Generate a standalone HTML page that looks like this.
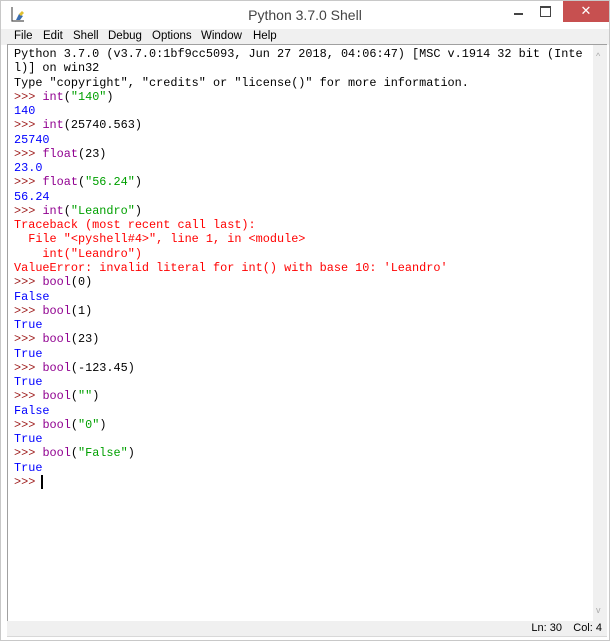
<!DOCTYPE html>
<html><head><style>
body{margin:0;width:610px;height:641px;background:#f0f0f0;position:relative;overflow:hidden;font-family:"Liberation Sans",sans-serif}
.win{position:absolute;left:0;top:0;width:608px;height:639px;border:1px solid #c8c8c8;background:#fff}
.title{position:absolute;left:0;top:0;width:608px;height:28px;background:#fff;}
.title .t{position:absolute;left:0;width:608px;top:6px;text-align:center;font-size:14px;color:#444}
.close{position:absolute;right:0;top:0;width:46px;height:21px;background:#c75050;color:#fff;text-align:center;font-size:13px;line-height:20px}
.max{position:absolute;right:58px;top:5px;width:9px;height:8px;border:1px solid #444;border-top-width:2px}
.min{position:absolute;right:86px;top:12px;width:9px;height:2px;background:#444}
.menu{position:absolute;left:0;top:28px;width:608px;height:16px;background:#f0f0f0;font-size:11.5px;color:#000}
.menu span{position:absolute;top:1px}
.text{position:absolute;left:6px;top:43px;width:586px;height:576px;border:1px solid #a0a0a0;border-right:none;background:#fff}
.scroll{position:absolute;left:592px;top:43px;width:14px;height:577px;background:#f0f0f0;border-top:1px solid #a0a0a0}
pre{margin:0;position:absolute;left:6px;top:2px;font-family:"Liberation Mono",monospace;font-size:11.85px;line-height:14.27px;color:#000}
.p{color:#a02020}.b{color:#900090}.s{color:#00a000}.o{color:#0000ff}.e{color:#ff0000}
.status{position:absolute;left:6px;top:620px;width:600px;height:15px;background:#f0f0f0;border-bottom:1px solid #d8d8d8;font-size:11px}
</style></head><body>
<div class="win">
<div class="title">
<svg style="position:absolute;left:9px;top:5px" width="16" height="17" viewBox="0 0 16 17"><path d="M2 1v14h12" fill="none" stroke="#555" stroke-width="1.2"/><path d="M6 14l3-6 4 2-3 4z" fill="#3a6db0"/><path d="M9 8l3-3 2 2-3 3z" fill="#e0c030"/></svg>
<div class="t">Python 3.7.0 Shell</div>
<div class="min"></div><div class="max"></div><div class="close">✕</div>
</div>
<div class="menu"><span style="left:13px">File</span><span style="left:42px">Edit</span><span style="left:72px">Shell</span><span style="left:107px">Debug</span><span style="left:151px">Options</span><span style="left:200px">Window</span><span style="left:252px">Help</span></div>
<div class="text"><pre>Python 3.7.0 (v3.7.0:1bf9cc5093, Jun 27 2018, 04:06:47) [MSC v.1914 32 bit (Inte
l)] on win32
Type "copyright", "credits" or "license()" for more information.
<span class="p">&gt;&gt;&gt; </span><span class="b">int</span>(<span class="s">"140"</span>)
<span class="o">140</span>
<span class="p">&gt;&gt;&gt; </span><span class="b">int</span>(25740.563)
<span class="o">25740</span>
<span class="p">&gt;&gt;&gt; </span><span class="b">float</span>(23)
<span class="o">23.0</span>
<span class="p">&gt;&gt;&gt; </span><span class="b">float</span>(<span class="s">"56.24"</span>)
<span class="o">56.24</span>
<span class="p">&gt;&gt;&gt; </span><span class="b">int</span>(<span class="s">"Leandro"</span>)
<span class="e">Traceback (most recent call last):
  File "&lt;pyshell#4&gt;", line 1, in &lt;module&gt;
    int("Leandro")
ValueError: invalid literal for int() with base 10: 'Leandro'</span>
<span class="p">&gt;&gt;&gt; </span><span class="b">bool</span>(0)
<span class="o">False</span>
<span class="p">&gt;&gt;&gt; </span><span class="b">bool</span>(1)
<span class="o">True</span>
<span class="p">&gt;&gt;&gt; </span><span class="b">bool</span>(23)
<span class="o">True</span>
<span class="p">&gt;&gt;&gt; </span><span class="b">bool</span>(-123.45)
<span class="o">True</span>
<span class="p">&gt;&gt;&gt; </span><span class="b">bool</span>(<span class="s">""</span>)
<span class="o">False</span>
<span class="p">&gt;&gt;&gt; </span><span class="b">bool</span>(<span class="s">"0"</span>)
<span class="o">True</span>
<span class="p">&gt;&gt;&gt; </span><span class="b">bool</span>(<span class="s">"False"</span>)
<span class="o">True</span>
<span class="p">&gt;&gt;&gt; </span><span style="border-left:2px solid #000;margin-left:-1px">&#8203;</span></pre></div>
<div class="scroll"><div style="position:absolute;left:3px;top:6px;font-size:9px;color:#aaa">^</div><div style="position:absolute;left:3px;top:560px;font-size:9px;color:#aaa">v</div></div>
<div class="status"><span style="position:absolute;right:45px;top:1px">Ln: 30</span><span style="position:absolute;right:5px;top:1px">Col: 4</span></div>
</div>
</body></html>
